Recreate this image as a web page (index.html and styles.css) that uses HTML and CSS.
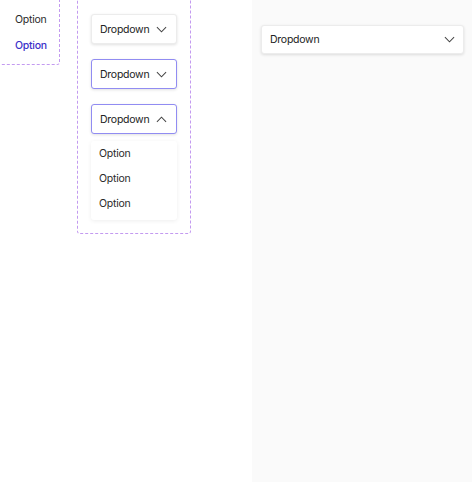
FILE: index.html
```html
<!DOCTYPE html>
<html lang="en">
<head>
  <meta charset="UTF-8" />
  <meta name="viewport" content="width=device-width, initial-scale=1.0" />
  <title>Dropdown</title>
  <link rel="stylesheet" href="styles.css">
</head>
<body>
  <div class="page">
    <div class="canvas">
      <div class="frame frame-list">
        <div class="option">Option</div>
        <div class="option active">Option</div>
      </div>

      <div class="frame frame-states">
        <div class="dropdown">
          <span>Dropdown</span>
          <svg class="chevron" viewBox="0 0 12 7"><path d="M1 1l5 5 5-5" /></svg>
        </div>
        <div class="dropdown focused">
          <span>Dropdown</span>
          <svg class="chevron" viewBox="0 0 12 7"><path d="M1 1l5 5 5-5" /></svg>
        </div>
        <div class="dropdown focused open">
          <span>Dropdown</span>
          <svg class="chevron" viewBox="0 0 12 7"><path d="M1 6l5-5 5 5" /></svg>
        </div>
        <div class="menu">
          <div class="option">Option</div>
          <div class="option">Option</div>
          <div class="option">Option</div>
        </div>
      </div>
    </div>

    <div class="preview">
      <div class="dropdown wide">
        <span>Dropdown</span>
        <svg class="chevron" viewBox="0 0 12 7"><path d="M1 1l5 5 5-5" /></svg>
      </div>
    </div>
  </div>
</body>
</html>
```

FILE: styles.css
```css
body {
  margin: 0;
  font-family: 'Inter', 'Noto Sans', sans-serif;
  font-size: 10.5px;
  letter-spacing: -0.25px;
  color: #2a2a2a;
  background: #fff;
}
.page {
  display: flex;
  height: 482px;
  overflow: hidden;
}
.canvas {
  width: 252px;
  display: flex;
  align-items: flex-start;
  gap: 17px;
}
.frame {
  border: 1px dashed #c39af0;
  border-radius: 3px;
  box-sizing: border-box;
}
.frame-list {
  margin-top: -20px;
  margin-left: -40px;
  width: 100px;
  padding: 26px 0 5px 54px;
}
.frame-states {
  margin-top: -20px;
  width: 114px;
  padding: 33px 13px 13px;
  display: flex;
  flex-direction: column;
}
.option {
  height: 26px;
  line-height: 26px;
  color: #2a2a2a;
}
.option.active {
  color: #3a2fc9;
  font-weight: 500;
}
.dropdown {
  height: 30px;
  box-sizing: border-box;
  display: flex;
  align-items: center;
  justify-content: space-between;
  padding: 0 9px 0 8px;
  background: #fff;
  border: 1px solid #ececec;
  border-radius: 3px;
  box-shadow: 0 1px 3px rgba(0, 0, 0, 0.12);
  color: #222;
  margin-bottom: 15px;
}
.dropdown.focused {
  border-color: #918cf2;
}
.dropdown.open {
  margin-bottom: 7px;
}
.chevron {
  width: 11px;
  height: 7px;
  fill: none;
  stroke: #444;
  stroke-width: 1.1;
}
.menu {
  background: #fff;
  border-radius: 3px;
  box-shadow: 0 1px 4px rgba(0, 0, 0, 0.07);
  padding: 0 0 4px;
}
.menu .option {
  height: 25px;
  line-height: 25px;
  padding-left: 8px;
}
.preview {
  width: 220px;
  background: #fafafa;
  padding: 25px 8px 0 9px;
  box-sizing: border-box;
}
.dropdown.wide {
  width: 203px;
  height: 29px;
  padding-right: 8px;
}
```
